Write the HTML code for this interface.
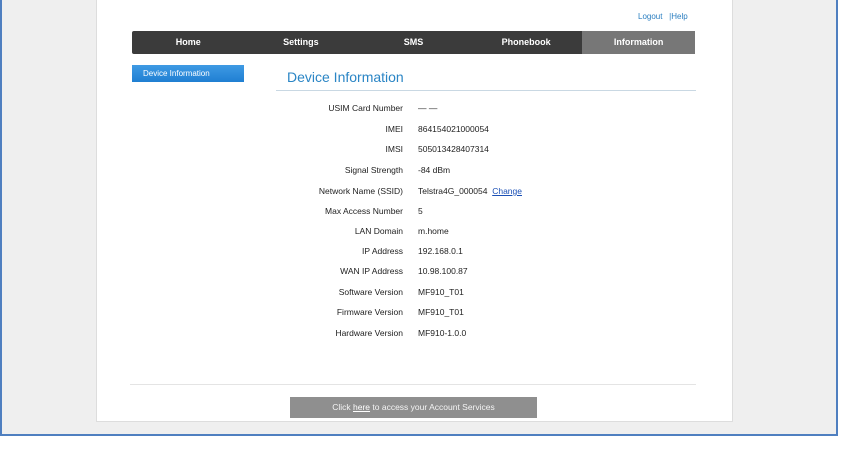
<!DOCTYPE html>
<html><head><style>
body{margin:0;width:847px;height:450px;background:#fff;position:relative;overflow:hidden;font-family:"Liberation Sans",Arial,sans-serif;}
#frame{position:absolute;left:0;top:0;width:834px;height:434px;border:2px solid #4f7fc0;border-top:none;background:#efefef;}
#panel{position:absolute;left:96px;top:0;width:635px;height:421px;background:#fff;border:1px solid #ddd;border-top:none;}
.toplinks{position:absolute;left:638px;top:12px;font-size:8px;color:#2a7ec0;}
#nav{position:absolute;left:132px;top:31px;width:563px;height:23px;background:#3b3b3b;border-radius:2px;display:flex;}
#nav div{width:112.6px;color:#fff;font-size:9px;font-weight:bold;text-align:center;line-height:23px;}
#nav div.act{background:#777;}
#side{position:absolute;left:132px;top:65px;width:112px;height:17px;background:linear-gradient(#3f9ae4,#1f7fd2);color:#fff;font-size:8px;line-height:17px;padding-left:11px;box-sizing:border-box;}
h1{position:absolute;left:287px;top:69px;margin:0;font-size:14px;font-weight:normal;color:#2a85c5;}
#hr{position:absolute;left:276px;top:90px;width:420px;height:1px;border-top:1px solid #c9d8e3;}
.row{position:absolute;font-size:8.5px;color:#222;}
.l{left:250px;width:153px;text-align:right;}
.v{left:418px;}
a{color:#1a4fb5;}
#foothr{position:absolute;left:130px;top:384px;width:566px;border-top:1px solid #e4e4e4;}
#btn{position:absolute;left:290px;top:397px;width:247px;height:21px;background:#8f8f8f;color:#f4f4f4;font-size:8.5px;text-align:center;line-height:21px;}
#btn u{color:#fff}
</style></head><body>
<div id="frame"></div>
<div id="panel"></div>
<div class="toplinks">Logout &nbsp;&nbsp;|Help</div>
<div id="nav"><div>Home</div><div>Settings</div><div>SMS</div><div>Phonebook</div><div class="act">Information</div></div>
<div id="side">Device Information</div>
<h1>Device Information</h1>
<div id="hr"></div>
<div class="row l" style="top:103px">USIM Card Number</div><div class="row v" style="top:103px">— —</div>
<div class="row l" style="top:124px">IMEI</div><div class="row v" style="top:124px">864154021000054</div>
<div class="row l" style="top:144px">IMSI</div><div class="row v" style="top:144px">505013428407314</div>
<div class="row l" style="top:165px">Signal Strength</div><div class="row v" style="top:165px">-84 dBm</div>
<div class="row l" style="top:186px">Network Name (SSID)</div><div class="row v" style="top:186px">Telstra4G_000054 &nbsp;<a href="#">Change</a></div>
<div class="row l" style="top:206px">Max Access Number</div><div class="row v" style="top:206px">5</div>
<div class="row l" style="top:226px">LAN Domain</div><div class="row v" style="top:226px">m.home</div>
<div class="row l" style="top:246px">IP Address</div><div class="row v" style="top:246px">192.168.0.1</div>
<div class="row l" style="top:266px">WAN IP Address</div><div class="row v" style="top:266px">10.98.100.87</div>
<div class="row l" style="top:287px">Software Version</div><div class="row v" style="top:287px">MF910_T01</div>
<div class="row l" style="top:307px">Firmware Version</div><div class="row v" style="top:307px">MF910_T01</div>
<div class="row l" style="top:328px">Hardware Version</div><div class="row v" style="top:328px">MF910-1.0.0</div>
<div id="foothr"></div>
<div id="btn">Click <u>here</u> to access your Account Services</div>
</body></html>
